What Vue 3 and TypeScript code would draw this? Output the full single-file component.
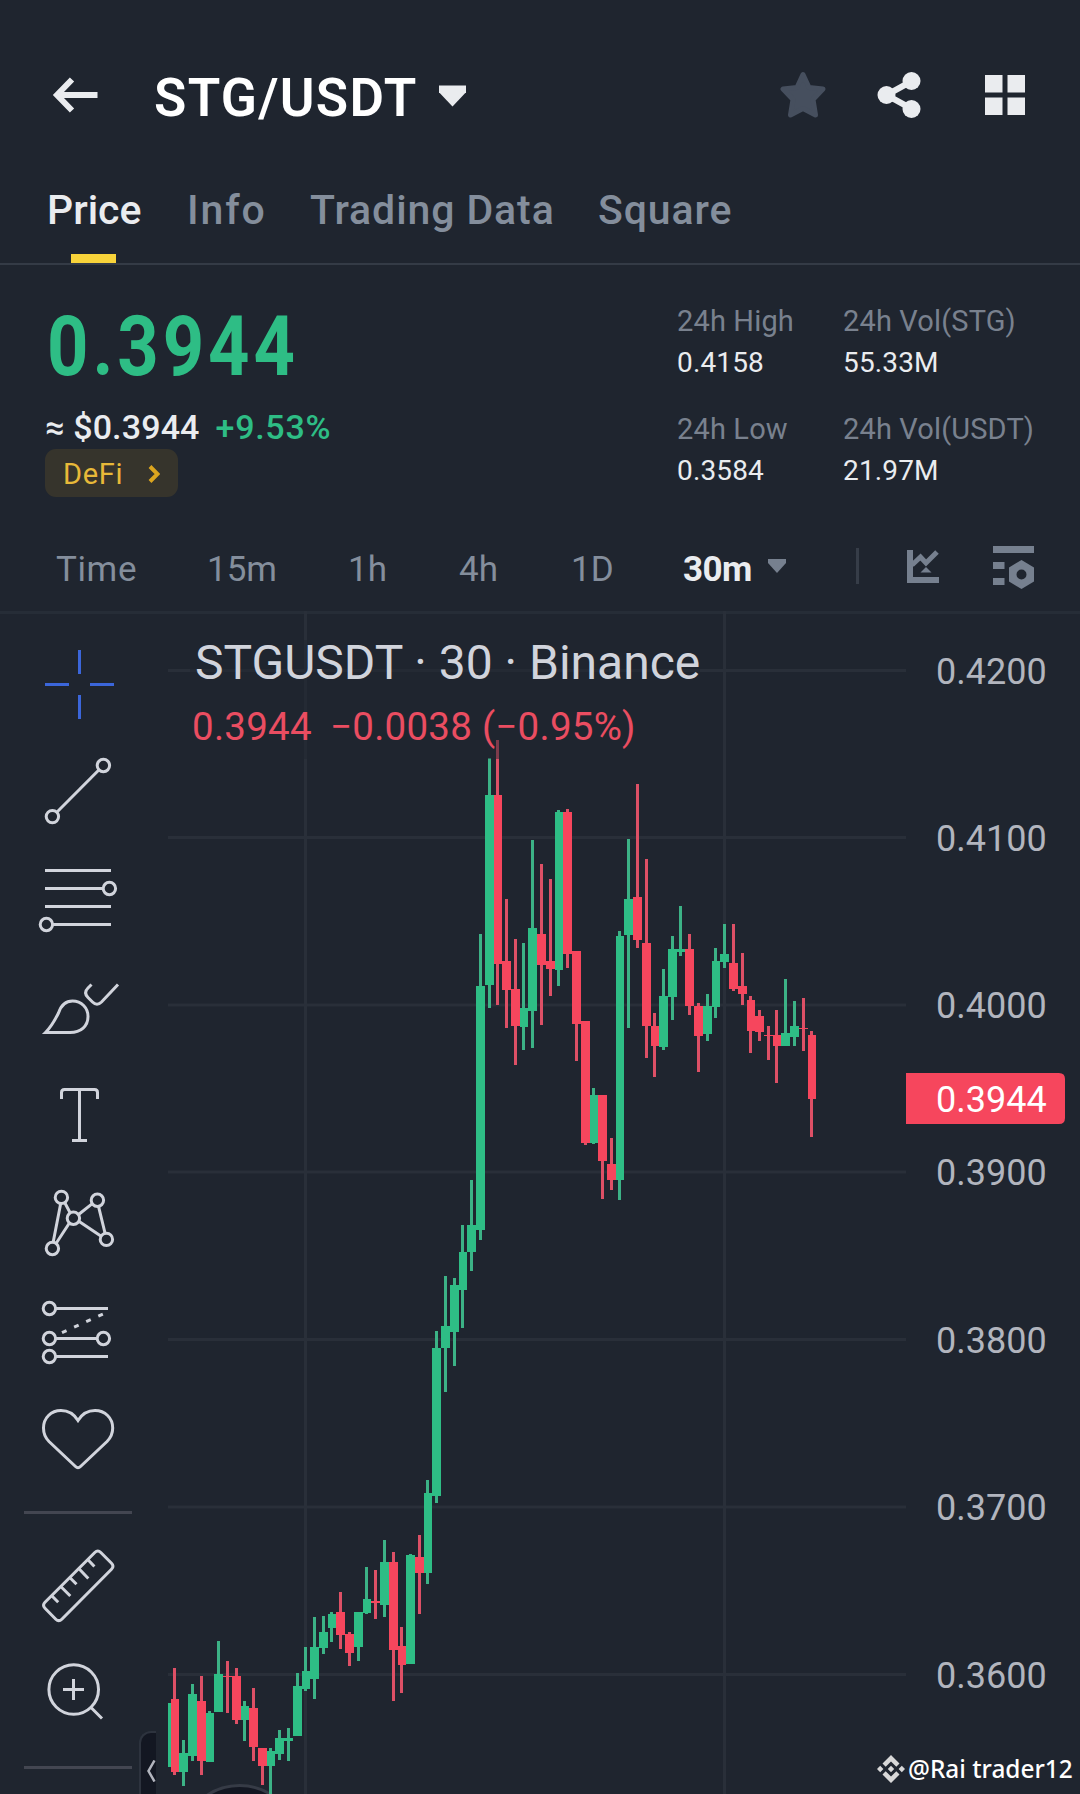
<script setup lang="ts">
interface Tool {
  name: string
  top: number
  height: number
  paths: string[]
  nodes?: [number, number][]
  dotted?: string
  active?: boolean
}

type Candle = [number, number, number, number, 'g' | 'r']

const tabs = ['Price', 'Info', 'Trading Data', 'Square']
const intervals = ['Time', '15m', '1h', '4h', '1D']

const stats = [
  { label: '24h High', value: '0.4158' },
  { label: '24h Vol(STG)', value: '55.33M' },
  { label: '24h Low', value: '0.3584' },
  { label: '24h Vol(USDT)', value: '21.97M' },
]

const tools: Tool[] = [
  {
    name: 'Crosshair', top: 615, height: 122, active: true,
    paths: ['M45 684.5H69M90 684.5H114M79.5 650V674M79.5 695V719'],
  },
  {
    name: 'Trend line', top: 737, height: 107,
    paths: ['M56.8 812.2L98.8 770'],
    nodes: [[103.4, 765.5], [52.4, 816.6]],
  },
  {
    name: 'Fib retracement', top: 844, height: 106,
    paths: ['M45 870.5H111M45 888.5H103M45 906.5H111M53 924.5H111'],
    nodes: [[109.4, 888.5], [46.4, 924.5]],
  },
  {
    name: 'Brush', top: 950, height: 112,
    paths: [
      'M45.500 1032.500C51 1027 55 1020 58.500 1013C60.500 1007 64 1001 72.5 1001C81.500 1001 88 1008 88 1016.500C88 1026 81 1032.500 70 1032.500Z',
      'M91.500 984.500L88 988C84.500 991.500 85 994.500 88 997.500L92.500 1002C95.500 1005 98.500 1005 101.500 1002L118 984.500',
    ],
  },
  {
    name: 'Text', top: 1062, height: 108,
    paths: ['M61.500 1099V1092.500Q61.500 1089.500 64.500 1089.500H94.500Q97.500 1089.500 97.500 1092.500V1099M79.500 1089.500V1140.500M72 1140.500H87'],
  },
  {
    name: 'Pattern', top: 1170, height: 115,
    paths: ['M60.700 1203.500L53.200 1242M64.800 1202.800L70 1212.500M78.600 1214.500L92 1203.800M98.500 1206.300L105 1233M78.800 1221.300L100.800 1236M69.400 1223L56.200 1243.200'],
    nodes: [[61.4, 1197.4], [97.4, 1200.2], [73.4, 1218.3], [52.4, 1248.5], [106.4, 1239.4]],
  },
  {
    name: 'Projection', top: 1285, height: 100,
    paths: ['M56 1308.500H108M56 1338.500H97M56 1356.500H108'],
    nodes: [[49.4, 1308.500], [49.4, 1338.500], [103.4, 1338.500], [49.4, 1356.500]],
    dotted: 'M62 1332.700L103 1314',
  },
  {
    name: 'Favourites', top: 1385, height: 126,
    paths: ['M78 1420.500C74 1414 68 1410.500 61 1410.500C51 1410.500 43.500 1418 43.500 1428C43.500 1434 45.500 1438 49 1441.500L75.500 1466.500Q78 1469 80.500 1466.500L107 1441.500C110.500 1438 112.700 1434 112.700 1428C112.700 1418 105 1410.500 95 1410.500C88 1410.500 82 1414 78 1420.500Z'],
  },
]

const utilities: Tool[] = [
  {
    name: 'Measure', top: 1514, height: 126,
    paths: [
      'M94.800 1552.500L45 1602.300Q42 1605.300 45 1608.300L55.800 1619.200Q58.800 1622.200 61.800 1619.200L111.500 1569.300Q114.500 1566.300 111.500 1563.300L100.800 1552.500Q97.800 1549.500 94.800 1552.500Z',
      'M52 1596L58.200 1602.200M61 1586.700L70.300 1596M70 1577.700L76.500 1584.300M79 1568.700L88.300 1578.500M88 1559.700L94.400 1566.500',
    ],
  },
  {
    name: 'Zoom in', top: 1640, height: 126,
    paths: ['M98.500 1689.500A24.800 24.800 0 1 1 48.900 1689.500A24.800 24.800 0 1 1 98.500 1689.500ZM63 1689.500H84M73.500 1679V1700M91 1707.500L102 1718.500'],
  },
]

/* [high, body top, body bottom, low, direction] in chart pixels, oldest first */
const candles: Candle[] = [
  [1703, 1703, 1767, 1767, 'g'],
  [1668, 1699, 1772, 1775, 'r'], [1740, 1753, 1772, 1786, 'g'], [1684, 1694, 1756, 1761, 'g'],
  [1676, 1701, 1761, 1775, 'r'], [1711, 1713, 1762, 1762, 'g'], [1641, 1674, 1712, 1712, 'g'],
  [1661, 1676, 1677, 1713, 'r'], [1668, 1676, 1720, 1724, 'r'], [1701, 1706, 1720, 1741, 'g'],
  [1688, 1708, 1747, 1761, 'r'], [1748, 1748, 1766, 1785, 'r'], [1748, 1751, 1766, 1794, 'g'],
  [1730, 1738, 1754, 1760, 'g'], [1728, 1738, 1741, 1761, 'g'], [1673, 1686, 1736, 1736, 'g'],
  [1647, 1671, 1689, 1691, 'g'], [1617, 1647, 1679, 1699, 'g'], [1616, 1632, 1648, 1654, 'g'],
  [1612, 1614, 1628, 1642, 'g'], [1592, 1612, 1635, 1649, 'r'], [1632, 1634, 1653, 1666, 'r'],
  [1612, 1612, 1647, 1661, 'g'], [1567, 1599, 1613, 1614, 'g'], [1570, 1601, 1603, 1619, 'r'],
  [1540, 1562, 1605, 1617, 'g'], [1552, 1562, 1650, 1701, 'r'], [1627, 1646, 1665, 1693, 'r'],
  [1554, 1555, 1664, 1664, 'g'], [1535, 1557, 1573, 1614, 'r'], [1480, 1493, 1573, 1584, 'g'],
  [1331, 1348, 1496, 1503, 'g'], [1276, 1326, 1348, 1392, 'g'], [1278, 1285, 1332, 1366, 'g'],
  [1225, 1252, 1290, 1328, 'g'], [1180, 1225, 1252, 1271, 'g'], [934, 986, 1230, 1240, 'g'],
  [758, 795, 985, 1008, 'g'], [740, 795, 964, 1005, 'r'], [899, 961, 990, 1028, 'r'],
  [939, 989, 1026, 1065, 'r'], [943, 1008, 1027, 1050, 'g'], [840, 928, 1011, 1048, 'g'],
  [864, 934, 965, 1025, 'r'], [879, 961, 969, 996, 'r'], [810, 812, 970, 986, 'g'],
  [809, 812, 954, 968, 'r'], [951, 951, 1024, 1061, 'r'], [1021, 1021, 1143, 1145, 'r'],
  [1088, 1095, 1143, 1144, 'g'], [1095, 1095, 1161, 1199, 'r'], [1138, 1164, 1180, 1190, 'r'],
  [931, 936, 1180, 1200, 'g'], [839, 899, 935, 1028, 'g'], [784, 897, 940, 948, 'r'],
  [859, 943, 1026, 1058, 'r'], [1013, 1026, 1046, 1077, 'r'], [969, 996, 1047, 1050, 'g'],
  [936, 949, 997, 1020, 'g'], [906, 949, 952, 956, 'g'], [934, 949, 1006, 1015, 'r'],
  [1003, 1006, 1036, 1072, 'r'], [994, 1006, 1034, 1041, 'g'], [948, 961, 1007, 1018, 'g'],
  [924, 954, 962, 968, 'g'], [924, 963, 989, 991, 'r'], [953, 986, 994, 1005, 'r'],
  [996, 1000, 1031, 1053, 'r'], [1010, 1016, 1032, 1041, 'r'], [1026, 1035, 1036, 1060, 'r'],
  [1010, 1035, 1046, 1083, 'r'], [979, 1033, 1046, 1046, 'g'], [1001, 1026, 1037, 1046, 'g'],
  [998, 1028, 1029, 1051, 'r'], [1031, 1035, 1099, 1137, 'r'],
]

const edge = (i: number) => Math.round(170.7 + 8.725 * (i - 1))

const bars = candles.map(([high, top, bottom, low, dir], i) => {
  const left = i === 0 ? 168 : edge(i)
  const width = edge(i + 1) - left
  return { left, width, wick: left + (width === 9 ? 3 : 2), high, top, bottom, low, dir }
})

const levels = [
  { y: 670.5, text: '0.4200' }, { y: 837.5, text: '0.4100' }, { y: 1005, text: '0.4000' },
  { y: 1172, text: '0.3900' }, { y: 1339.5, text: '0.3800' }, { y: 1507, text: '0.3700' },
  { y: 1674.5, text: '0.3600' },
]
</script>

<template>
  <main class="screen">
    <header class="header">
      <svg class="back" width="46" height="36" viewBox="0 0 46 36">
        <path d="M20 2.500L5 18L20 33.500M4 18H45.500" />
      </svg>
      <h1 class="pair">STG/USDT</h1>
      <svg class="caret" width="27" height="22" viewBox="0 0 28 22"><path d="M0 0H28V7L14 22L0 7Z" /></svg>
      <svg class="star" width="46" height="48" viewBox="0 0 46 48">
        <path d="M23 3.500L29 16.500L43 18L33 28.500L35.500 44L23 37.500L10.500 44L13 28.500L3 18L17 16.500Z" />
      </svg>
      <svg class="share" width="44" height="48" viewBox="0 0 44 48">
        <path d="M35 10L9.500 24L35 38" />
        <circle cx="34.500" cy="10" r="9" /><circle cx="9.500" cy="24" r="9" /><circle cx="34.500" cy="38" r="9" />
      </svg>
      <svg class="tiles" width="40" height="40" viewBox="0 0 40 40">
        <path d="M0 0H17.500V17.500H0ZM22.500 0H40V17.500H22.500ZM0 22.500H17.500V40H0ZM22.500 22.500H40V40H22.500Z" />
      </svg>
    </header>

    <nav class="tabs">
      <span v-for="(tab, i) in tabs" :key="tab" class="tab" :class="{ current: i === 0 }">{{ tab }}</span>
    </nav>

    <section class="summary">
      <div class="quote">
        <div class="last">0.3944</div>
        <div class="fiat"><span class="usd">≈ $0.3944</span><span class="change">+9.53%</span></div>
        <div class="tag">
          <span>DeFi</span>
          <svg width="12" height="18" viewBox="0 0 12 18"><path d="M2 1.500L9.500 9L2 16.500" /></svg>
        </div>
      </div>
      <dl class="stats">
        <div v-for="s in stats" :key="s.label">
          <dt>{{ s.label }}</dt>
          <dd>{{ s.value }}</dd>
        </div>
      </dl>
    </section>

    <nav class="intervals">
      <span v-for="item in intervals" :key="item" class="interval">{{ item }}</span>
      <span class="interval chosen">30m</span>
      <svg class="drop" width="18" height="14" viewBox="0 0 18 14"><path d="M0 0H18V4L9 14L0 4Z" /></svg>
      <i class="bar"></i>
      <svg class="indicator" width="32" height="33" viewBox="0 0 32 33">
        <path d="M0 0H6V27H32V33H0Z" />
        <path class="stroke" d="M5 15L13.500 7L19 13L30 2" />
        <path d="M19 17L24.500 22.500H13.500Z" />
      </svg>
      <svg class="settings" width="42" height="43" viewBox="0 0 42 43">
        <path d="M0 0H41V7H0ZM0 16H11.500V23H0ZM0 32H11.500V39H0Z" />
        <path fill-rule="evenodd" d="M28.500 14L41 21.500V35.500L28.500 43L16 35.500V21.500ZM28.500 23.500A5 5 0 1 0 28.500 33.500A5 5 0 1 0 28.500 23.500Z" />
      </svg>
    </nav>

    <section class="workspace">
      <aside class="toolbar">
        <svg
          v-for="t in tools" :key="t.name" class="tool" :class="{ active: t.active }"
          width="168" :height="t.height" :viewBox="`0 ${t.top} 168 ${t.height}`"
        >
          <path v-for="d in t.paths" :key="d" :d="d" />
          <path v-if="t.dotted" class="dots" :d="t.dotted" />
          <circle v-for="(n, i) in t.nodes" :key="i" :cx="n[0]" :cy="n[1]" r="6.200" />
        </svg>
        <hr />
        <svg
          v-for="t in utilities" :key="t.name" class="tool"
          width="168" :height="t.height" :viewBox="`0 ${t.top} 168 ${t.height}`"
        >
          <path v-for="d in t.paths" :key="d" :d="d" />
        </svg>
        <hr />
        <div class="collapse">
          <svg width="10" height="22" viewBox="0 0 10 22"><path d="M8.500 0.500L2.500 11L8.500 21.500" /></svg>
        </div>
      </aside>

      <svg class="chart" width="912" height="1179" viewBox="168 615 912 1179">
        <g class="grid">
          <path v-for="l in levels" :key="l.text" :d="`M168 ${l.y}H906`" />
          <path d="M305.500 611V1794M724.500 611V1794" />
        </g>
        <circle class="knob" cx="239.500" cy="1843.500" r="58" />
        <g v-for="(b, i) in bars" :key="i" :class="b.dir">
          <rect class="wick" :x="b.wick" :y="b.high" width="3" :height="b.low - b.high" />
          <rect :x="b.left" :y="b.top" :width="b.width" :height="b.bottom - b.top" />
        </g>
        <rect class="veil" x="190" y="640" width="510" height="119" />
        <text class="symbol" x="195" y="679">STGUSDT · 30 · Binance</text>
        <text class="delta" x="192" y="740">0.3944</text>
        <text class="delta" x="330" y="740">−0.0038 (−0.95%)</text>
        <text v-for="l in levels" :key="l.text" class="level" x="936" :y="l.y + 13">{{ l.text }}</text>
        <path class="flag" d="M906 1073H1059Q1065 1073 1065 1079V1118Q1065 1124 1059 1124H906Z" />
        <text class="level now" x="936" y="1111.500">0.3944</text>
      </svg>

      <div class="credit">
        <svg width="28" height="28" viewBox="0 0 28 28">
          <path d="M14 0L22.500 8.500L19.300 11.700L14 6.400L8.700 11.700L5.500 8.500ZM3.200 10.800L6.400 14L3.200 17.200L0 14ZM24.800 10.800L28 14L24.800 17.200L21.600 14ZM14 10.800L17.200 14L14 17.200L10.800 14ZM14 28L5.500 19.500L8.700 16.300L14 21.600L19.300 16.300L22.500 19.500Z" />
        </svg>
        <span>@Rai trader12</span>
      </div>
    </section>
  </main>
</template>

<style>
body { background: #1f252f; }
</style>

<style scoped>
.screen {
  width: 1080px;
  height: 1794px;
  overflow: hidden;
  background: #1f252f;
  color: #eaecef;
  font-family: Roboto, "Noto Sans", sans-serif;
}
svg { display: block; flex: none; }

.header {
  box-sizing: border-box;
  display: flex;
  align-items: center;
  height: 170px;
  padding: 20px 55px 0 52px;
  fill: #eaecef;
}
.back { fill: none; stroke: #eaecef; stroke-width: 6; }
.pair {
  width: 285px;
  margin: 5px 0 0 56px;
  color: #fff;
  font-size: 53px;
  font-weight: 600;
  line-height: 64px;
  letter-spacing: 1.300px;
  white-space: nowrap;
}
.caret { margin-top: 2px; }
.star { margin-left: auto; fill: #464f5e; stroke: #464f5e; stroke-width: 5; stroke-linejoin: round; }
.share { margin-left: 51px; }
.share path { fill: none; stroke: #eaecef; stroke-width: 6; }
.tiles { margin-left: 64px; }

.tabs {
  box-sizing: border-box;
  display: grid;
  grid-template-columns: 140px 123px 288px 1fr;
  height: 95px;
  padding-left: 47px;
  border-bottom: 2px solid #343b46;
  color: #848e9c;
  font-size: 41px;
  font-weight: 500;
  line-height: 80px;
  letter-spacing: 0.900px;
  white-space: nowrap;
}
.tab:nth-child(2) { letter-spacing: 1.900px; }
.tab.current { color: #eaecef; letter-spacing: 0; }
.current::after {
  content: "";
  display: block;
  width: 45px;
  height: 9px;
  margin: 4px 0 0 24px;
  background: #f8d33a;
}

.summary {
  box-sizing: border-box;
  display: flex;
  height: 263px;
  padding-left: 45px;
}
.quote { width: 632px; padding-top: 40px; }
.last {
  margin-left: 2px;
  color: #2ebd85;
  font-size: 84px;
  font-weight: 700;
  line-height: 84px;
  letter-spacing: 4.600px;
  transform: scaleX(0.86);
  transform-origin: left center;
}
.fiat {
  display: flex;
  gap: 16px;
  margin-top: 16px;
  font-size: 34px;
  font-weight: 500;
  line-height: 44px;
  letter-spacing: 0.150px;
}
.change { color: #2ebd85; letter-spacing: 0.700px; }
.tag {
  box-sizing: border-box;
  display: flex;
  align-items: center;
  justify-content: space-between;
  width: 133px;
  height: 48px;
  padding: 1px 18px 0 18px;
  border-radius: 11px;
  background: #36342c;
  color: #e8b939;
  font-size: 29px;
  letter-spacing: 0.700px;
}
.tag path { fill: none; stroke: #dba51f; stroke-width: 4; }
.stats {
  display: grid;
  grid-template-columns: 166px 210px;
  grid-auto-rows: 84px;
  row-gap: 24px;
  margin: 0;
  padding-top: 35px;
  font-size: 29px;
  line-height: 42px;
  letter-spacing: 0.150px;
  white-space: nowrap;
}
dt { color: #79818e; }
dd { margin: 0; font-size: 28px; }

.intervals {
  display: flex;
  align-items: center;
  height: 83px;
  padding-left: 56px;
  border-bottom: 3px solid #262d37;
  color: #848e9c;
  font-size: 35px;
  fill: #76808f;
}
.interval { width: 151px; }
.interval:nth-child(1) { letter-spacing: 0.600px; }
.interval:nth-child(2) { width: 141px; }
.interval:nth-child(3) { width: 111px; }
.interval:nth-child(4) { width: 112px; }
.interval:nth-child(5) { width: 112px; }
.interval.chosen { width: 85px; color: #eaecef; font-weight: 700; letter-spacing: -0.600px; }
.drop { margin-top: -7px; }
.bar { width: 3px; height: 36px; margin: -7px 0 0 70px; background: #363d48; }
.indicator { margin: -7px 0 0 48px; }
.stroke { fill: none; stroke: #76808f; stroke-width: 5; }
.settings { margin: -5px 0 0 54px; }

.workspace { position: relative; display: flex; height: 1179px; margin-top: 1px; }
.toolbar { position: relative; width: 168px; }
.tool { fill: none; stroke: #d1d4dc; stroke-width: 3; }
.active { stroke: #3b66da; }
.dots { stroke-dasharray: 5 8.300; }
hr { width: 108px; height: 3px; margin: 0 0 0 24px; border: 0; background: #434651; }
.collapse {
  position: absolute;
  left: 139px;
  top: 1116px;
  box-sizing: border-box;
  width: 17px;
  height: 70px;
  padding: 27px 0 0 5px;
  border: 2px solid #2d333e;
  border-right: 0;
  border-radius: 12px 0 0 0;
  background: #131722;
}
.collapse path { fill: none; stroke: #b2b5be; stroke-width: 2.500; }

.chart { overflow: visible; }
.grid path { stroke: #292f39; stroke-width: 3; }
.knob { fill: #131722; stroke: #363b46; stroke-width: 3; }
.g { fill: #2ebd85; }
.r { fill: #f6465d; }
.g .wick { fill: #3cb286; }
.r .wick { fill: #dd5066; }
.veil { fill: #1f252f; opacity: 0.5; }
.symbol { fill: #d1d4dc; font-size: 48px; }
.delta { fill: #ea4d61; font-size: 38.500px; letter-spacing: 0.250px; }
.level { fill: #b2b5be; font-size: 36px; }
.now { fill: #fff; }
.flag { fill: #f6465d; }

.credit {
  position: absolute;
  left: 877px;
  bottom: 8px;
  display: flex;
  align-items: center;
  gap: 3px;
  height: 34px;
  color: #fff;
  font: 500 24.400px/34px "Noto Sans", sans-serif;
  fill: #d8d8d8;
  white-space: nowrap;
}
</style>
